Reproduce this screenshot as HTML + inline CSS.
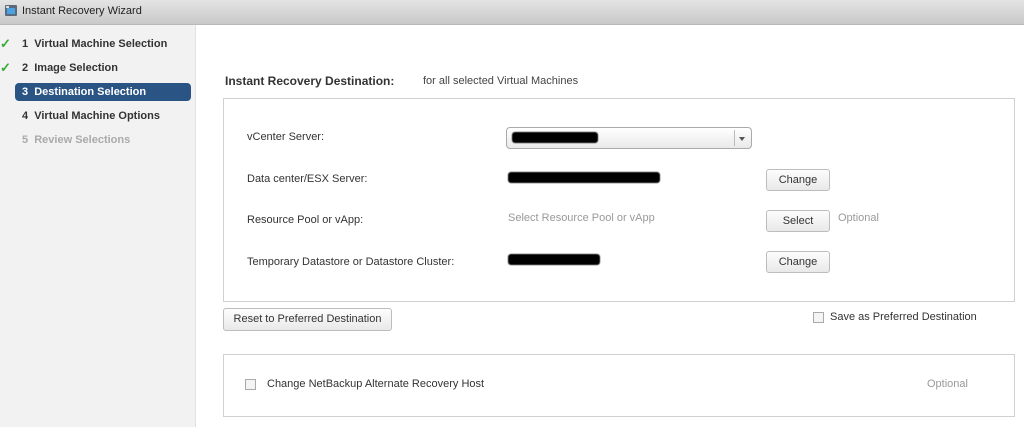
<!DOCTYPE html><html><head><style>
body{margin:0;width:1024px;height:427px;overflow:hidden;background:#fff;font-family:"Liberation Sans",Arial,sans-serif;font-size:11px;color:#333;position:relative}
.a{position:absolute}
.title{left:0;top:0;width:1024px;height:24px;background:linear-gradient(#e4e4e4,#c9c9c9);border-bottom:1px solid #b8b8b8}
.side{left:0;top:25px;width:195px;height:402px;background:#f2f2f2;border-right:1px solid #e2e2e2}
.step{font-weight:bold;font-size:11px;color:#333}
.btn{border:1px solid #bdbdbd;border-radius:3px;background:linear-gradient(#fdfdfd,#e9e9e9);text-align:center;font-size:11px;color:#333;box-sizing:border-box}
.red{background:#000;border-radius:3px;height:11px;filter:blur(.5px)}
.cb{width:11px;height:11px;border:1px solid #aaa;background:#f4f4f4;box-sizing:border-box}
</style></head><body>
<div class="a title"></div>
<svg class="a" style="left:4px;top:4px" width="14" height="14"><rect x="1" y="1" width="12" height="11" fill="#5a6a7a" rx="1"/><rect x="3" y="4" width="8" height="6" fill="#4aa3e0"/><rect x="2" y="2" width="3" height="2" fill="#ddd"/></svg>
<div class="a" style="left:22px;top:5px;font-size:11px;color:#222">Instant Recovery Wizard</div>
<div class="a side"></div>
<div class="a" style="left:0;top:36px;color:#3a3;font-weight:bold;font-size:13px">✓</div>
<div class="a" style="left:0;top:60px;color:#3a3;font-weight:bold;font-size:13px">✓</div>
<div class="a step" style="left:22px;top:38px">1&nbsp; Virtual Machine Selection</div>
<div class="a step" style="left:22px;top:62px">2&nbsp; Image Selection</div>
<div class="a" style="left:15px;top:83px;width:176px;height:18px;background:#2a5484;border-radius:4px"></div>
<div class="a step" style="left:22px;top:86px;color:#fff">3&nbsp; Destination Selection</div>
<div class="a step" style="left:22px;top:110px">4&nbsp; Virtual Machine Options</div>
<div class="a step" style="left:22px;top:134px;color:#aaa">5&nbsp; Review Selections</div>
<div class="a" style="left:225px;top:74px;font-weight:bold;font-size:12px;color:#333">Instant Recovery Destination:</div>
<div class="a" style="left:423px;top:75px;font-size:11px;color:#444">for all selected Virtual Machines</div>
<div class="a" style="left:223px;top:98px;width:792px;height:204px;border:1px solid #d0d0d0;box-sizing:border-box"></div>
<div class="a" style="left:247px;top:131px">vCenter Server:</div>
<div class="a" style="left:247px;top:173px">Data center/ESX Server:</div>
<div class="a" style="left:247px;top:214px">Resource Pool or vApp:</div>
<div class="a" style="left:247px;top:256px">Temporary Datastore or Datastore Cluster:</div>
<div class="a" style="left:506px;top:127px;width:246px;height:22px;border:1px solid #aaa;border-radius:4px;background:linear-gradient(#fff,#e9e9e9);box-sizing:border-box"></div>
<div class="a" style="left:734px;top:130px;width:1px;height:16px;background:#bbb"></div>
<div class="a" style="left:739px;top:137px;width:0;height:0;border-left:3px solid transparent;border-right:3px solid transparent;border-top:4px solid #555"></div>
<div class="a red" style="left:512px;top:132px;width:86px"></div>
<div class="a red" style="left:508px;top:172px;width:152px"></div>
<div class="a" style="left:508px;top:212px;color:#999">Select Resource Pool or vApp</div>
<div class="a red" style="left:508px;top:254px;width:92px"></div>
<div class="a btn" style="left:766px;top:169px;width:64px;height:22px;line-height:20px">Change</div>
<div class="a btn" style="left:766px;top:210px;width:64px;height:22px;line-height:20px">Select</div>
<div class="a" style="left:838px;top:212px;color:#999">Optional</div>
<div class="a btn" style="left:766px;top:251px;width:64px;height:22px;line-height:20px">Change</div>
<div class="a btn" style="left:223px;top:308px;width:169px;height:23px;line-height:21px">Reset to Preferred Destination</div>
<div class="a cb" style="left:813px;top:312px"></div>
<div class="a" style="left:830px;top:311px">Save as Preferred Destination</div>
<div class="a" style="left:223px;top:354px;width:792px;height:63px;border:1px solid #d0d0d0;box-sizing:border-box"></div>
<div class="a cb" style="left:245px;top:379px"></div>
<div class="a" style="left:267px;top:378px">Change NetBackup Alternate Recovery Host</div>
<div class="a" style="left:927px;top:378px;color:#999">Optional</div>
</body></html>
